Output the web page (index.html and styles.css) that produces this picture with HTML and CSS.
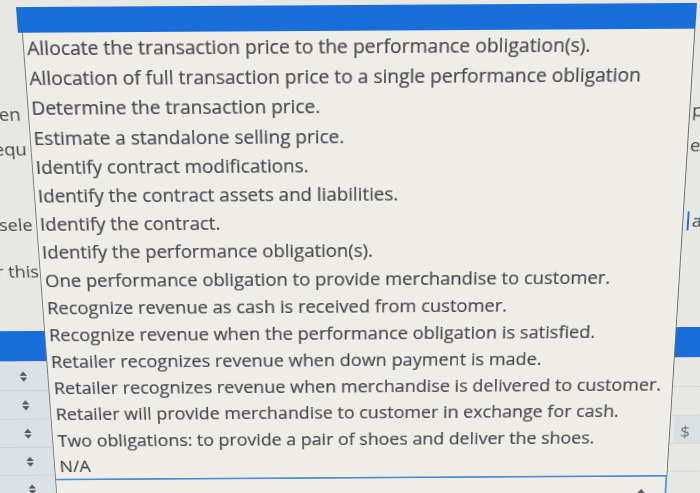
FILE: index.html
```html
<!DOCTYPE html>
<html lang="en">
<head>
<meta charset="utf-8">
<title>Dropdown</title>
<link rel="stylesheet" href="styles.css">
</head>
<body>
<div class="scene">
  <div class="page">
    <div class="line l1"><span class="lt">en</span><span class="rt">pe</span></div>
    <div class="line l2"><span class="lt">equ</span><span class="rt">e</span></div>
    <div class="line l3"><span class="lt">sele</span><span class="rt"><span class="caret"></span>a</span></div>
    <div class="line l4"><span class="lt">r this</span></div>
    <div class="band"></div>
    <div class="rows">
      <div class="row"><div class="cell-l"><i class="spin"></i></div><div class="cell-m"></div><div class="cell-r"></div></div>
      <div class="row"><div class="cell-l"><i class="spin"></i></div><div class="cell-m"></div><div class="cell-r"></div></div>
      <div class="row"><div class="cell-l"><i class="spin"></i></div><div class="cell-m"></div><div class="cell-r"><span class="money">$</span></div></div>
      <div class="row"><div class="cell-l"><i class="spin"></i></div><div class="cell-m"></div><div class="cell-r"></div></div>
      <div class="row"><div class="cell-l"><i class="spin"></i></div><div class="cell-m select"><i class="spin"></i></div><div class="cell-r"></div></div>
    </div>
  </div>
  <div class="list">
    <div class="opt sel"></div>
    <div class="opt">Allocate the transaction price to the performance obligation(s).</div>
    <div class="opt">Allocation of full transaction price to a single performance obligation</div>
    <div class="opt">Determine the transaction price.</div>
    <div class="opt">Estimate a standalone selling price.</div>
    <div class="opt">Identify contract modifications.</div>
    <div class="opt">Identify the contract assets and liabilities.</div>
    <div class="opt">Identify the contract.</div>
    <div class="opt">Identify the performance obligation(s).</div>
    <div class="opt">One performance obligation to provide merchandise to customer.</div>
    <div class="opt">Recognize revenue as cash is received from customer.</div>
    <div class="opt">Recognize revenue when the performance obligation is satisfied.</div>
    <div class="opt">Retailer recognizes revenue when down payment is made.</div>
    <div class="opt">Retailer recognizes revenue when merchandise is delivered to customer.</div>
    <div class="opt">Retailer will provide merchandise to customer in exchange for cash.</div>
    <div class="opt">Two obligations: to provide a pair of shoes and deliver the shoes.</div>
    <div class="opt">N/A</div>
  </div>
</div>
</body>
</html>
```
FILE: styles.css
```css
html, body {
  margin: 0;
  padding: 0;
}
body {
  width: 700px;
  height: 493px;
  overflow: hidden;
  background: #e7e7e4;
  font-family: "Open Sans", "DejaVu Sans", sans-serif;
}
.scene {
  position: relative;
  width: 805px;
  height: 600px;
  margin-left: -45px;
  background: #e7e7e4;
  transform-origin: 402px 5px;
  transform: perspective(554px) rotate(-0.35deg) rotateX(-6.4deg);
}
.page {
  display: flex;
  flex-direction: column;
}
.line {
  display: flex;
  justify-content: space-between;
  height: 37px;
  line-height: 37px;
  font-size: 19px;
  color: #45474a;
  white-space: nowrap;
}
.l1 { margin-top: 97px; }
.l3 { margin-top: 45px; }
.l4 { margin-top: 15px; }
.l1 .lt { margin-left: 35px; }
.l2 .lt { margin-left: 27px; }
.l3 .lt { margin-left: 26px; }
.l4 .lt { margin-left: 19px; }
.l1 .rt { margin-right: 31px; width: 30px; }
.l2 .rt { margin-right: 31px; width: 30px; }
.l3 .rt { margin-right: 29px; width: 30px; display: flex; align-items: center; }
.caret {
  width: 2px;
  height: 21px;
  background: #2a6fd0;
  margin-right: 3px;
}
.band {
  height: 35px;
  margin-top: 49px;
  background: #1a6eda;
}
.rows {
  display: flex;
  flex-direction: column;
  margin-top: 1px;
}
.row {
  display: flex;
  height: 34px;
}
.cell-l {
  width: 65px;
  box-sizing: border-box;
  background: #dce1e5;
  border-bottom: 1px solid #cdd3d8;
  display: flex;
  align-items: center;
  padding-left: 35px;
}
.cell-m {
  width: 677px;
}
.cell-r {
  flex: 1;
  box-sizing: border-box;
  border-bottom: 1px solid #d5d7d6;
  display: flex;
  align-items: stretch;
}
.money {
  flex: 1;
  margin-left: 4px;
  padding-left: 7px;
  background: #dadfe2;
  color: #6b7783;
  font-size: 19px;
  line-height: 38px;
}
.select {
  box-sizing: border-box;
  margin-top: 4px;
  background: #eeede8;
  border-top: 2px solid #4a8bd6;
  border-right: 2px solid #5b93d3;
  border-left: 1px solid #808080;
  display: flex;
  justify-content: flex-end;
  align-items: flex-start;
  padding-top: 15px;
  padding-right: 22px;
}
.spin {
  display: flex;
  flex-direction: column;
  gap: 2px;
  width: 8px;
}
.spin::before {
  content: "";
  border-left: 4px solid transparent;
  border-right: 4px solid transparent;
  border-bottom: 5px solid #55585d;
}
.spin::after {
  content: "";
  border-left: 4px solid transparent;
  border-right: 4px solid transparent;
  border-top: 5px solid #55585d;
}
.list {
  position: absolute;
  left: 65px;
  top: 5px;
  width: 677px;
  box-sizing: border-box;
  background: #eeede8;
  border-left: 1px solid #7d7d7d;
  border-right: 1px solid #6f6f6f;
  font-size: 19.5px;
  color: #464a50;
  -webkit-text-stroke: 0.2px #464a50;
}
.opt {
  height: 31.2px;
  line-height: 31.2px;
  padding-left: 3px;
  white-space: nowrap;
}
.opt:nth-child(n+10) {
  padding-left: 4px;
}
.opt:nth-child(n+14) {
  padding-left: 5px;
}
.opt.sel {
  height: 26px;
  margin-left: -5px;
  margin-right: -1px;
  background: #1a6eda;
}
```
